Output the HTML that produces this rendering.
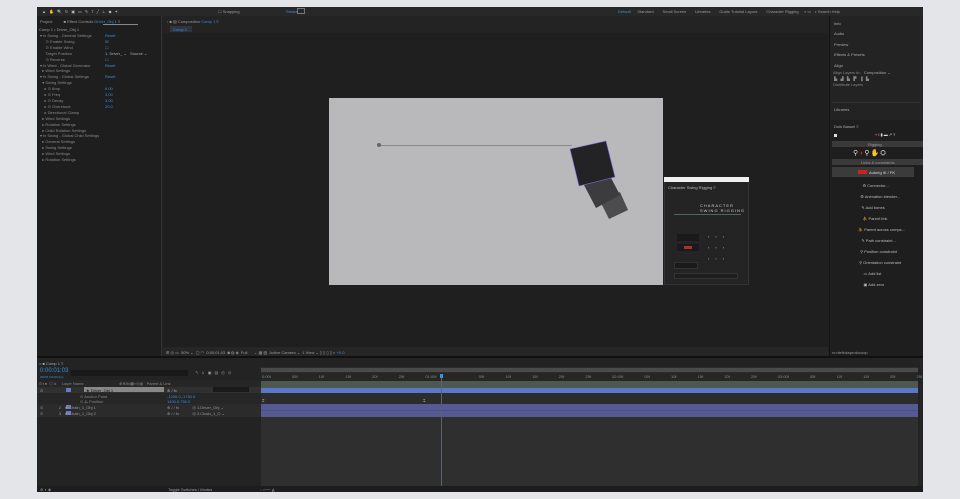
<!DOCTYPE html>
<html><head><style>
*{margin:0;padding:0;box-sizing:border-box}
body{width:960px;height:499px;background:#e4e5e8;position:relative;overflow:hidden;font-family:"Liberation Sans",sans-serif;font-size:4px;color:#9a9a9a}
div{position:absolute}
.t{white-space:nowrap;font-size:4px}
.b{color:#3c8ee0}
</style></head><body>
<div style="left:37px;top:7px;width:886px;height:485px;background:#232323"></div>
<!-- top bar -->
<div style="left:37px;top:7px;width:886px;height:9px;background:#282828"></div>
<div class="t" style="left:42px;top:9px;color:#bbb;letter-spacing:3px">▲✋🔍↻▣▭✎T╱⊥◆✶</div>
<div class="t" style="left:218px;top:9px">☐ Snapping</div>
<div class="t" style="left:286px;top:9px" ><span class="b">Stroke</span></div>
<div style="left:297px;top:8px;width:8px;height:6px;border:1px solid #777"></div>
<div class="t" style="left:618px;top:9px"><span class="b">Default</span> &nbsp;&nbsp;&nbsp;&nbsp; Standard &nbsp;&nbsp;&nbsp;&nbsp;&nbsp;&nbsp; Small Screen &nbsp;&nbsp;&nbsp;&nbsp;&nbsp;&nbsp; Libraries &nbsp;&nbsp;&nbsp;&nbsp;&nbsp;&nbsp; Guide Tutorial Layout &nbsp;&nbsp;&nbsp;&nbsp;&nbsp;&nbsp; Character Rigging &nbsp;&nbsp;&nbsp; » ▭ &nbsp; ⌕ Search Help</div>
<!-- left panel -->
<div style="left:37px;top:16px;width:125px;height:340px;background:#1e1e1e;border-right:1px solid #333"></div>
<div class="t" style="left:40px;top:19px">Project &nbsp;&nbsp;&nbsp;&nbsp;&nbsp;&nbsp;&nbsp;&nbsp; ■ Effect Controls <span class="b">Driver_Obj 1</span> ≡</div>
<div style="left:103px;top:24px;width:35px;height:1px;background:#888"></div>
<div class="t" style="left:39px;top:27px">Comp 1 • Driver_Obj 1</div>
<div class="t" style="left:40px;top:33px;line-height:5.9px;color:#8a8a8a">
▾ fx Swing - General Settings<br>&nbsp;&nbsp;&nbsp;&nbsp;&nbsp;⊙ Enable Swing<br>&nbsp;&nbsp;&nbsp;&nbsp;&nbsp;⊙ Enable Wind<br>&nbsp;&nbsp;&nbsp;&nbsp;&nbsp;Target Position<br>&nbsp;&nbsp;&nbsp;&nbsp;&nbsp;⊙ Reverse<br>▾ fx Wind - Global Generator<br>&nbsp;&nbsp;▸ Wind Settings<br>▾ fx Swing - Global Settings<br>&nbsp;&nbsp;▾ Swing Settings<br>&nbsp;&nbsp;&nbsp;&nbsp;▸ ⊙ Amp<br>&nbsp;&nbsp;&nbsp;&nbsp;▸ ⊙ Freq<br>&nbsp;&nbsp;&nbsp;&nbsp;▸ ⊙ Decay<br>&nbsp;&nbsp;&nbsp;&nbsp;▸ ⊙ Overshoot<br>&nbsp;&nbsp;&nbsp;&nbsp;▸ Directional Clamp<br>&nbsp;&nbsp;▸ Wind Settings<br>&nbsp;&nbsp;▸ Rotation Settings<br>&nbsp;&nbsp;▸ Child Rotation Settings<br>▾ fx Swing - Global Child Settings<br>&nbsp;&nbsp;▸ General Settings<br>&nbsp;&nbsp;▸ Swing Settings<br>&nbsp;&nbsp;▸ Wind Settings<br>&nbsp;&nbsp;▸ Rotation Settings</div>
<div class="t b" style="left:105px;top:33px;line-height:5.9px">Reset<br>☒<br>☐<br><span style="color:#aaa">1. Driver_ ⌄ &nbsp; Source ⌄</span><br>☐<br>Reset<br><br>Reset<br><br>6.00<br>3.00<br>3.00<br>20.0</div>
<!-- viewer -->
<div class="t" style="left:167px;top:19px">› ■ ▤ Composition <span class="b">Comp 1</span> ≡</div>
<div style="left:170px;top:26px;width:22px;height:6px;background:#2e3440"></div>
<div class="t b" style="left:173px;top:27px">Comp 1</div>
<div style="left:163px;top:33px;width:665px;height:314px;background:#1f1f1f"></div>
<div style="left:329px;top:98px;width:334px;height:187px;background:#b9b9bb"></div>
<div style="left:378px;top:145px;width:194px;height:1px;background:#8a8a8a"></div>
<div style="left:377px;top:143px;width:4px;height:4px;border-radius:50%;background:#666"></div>
<svg style="position:absolute;left:0;top:0" width="960" height="499">
<polygon points="600,201 620,192 628,210 609,219" fill="#4c4c4e"/>
<polygon points="584,185 610,176 620,195 596,208" fill="#3c3c3e"/>
<polygon points="570,149 606,141 615,177 579,186" fill="#232325" stroke="#7a70e8" stroke-width=".6"/>
</svg>
<!-- character panel -->
<div style="left:664px;top:177px;width:85px;height:108px;background:#242424;border:1px solid #333"></div>
<div style="left:664px;top:177px;width:85px;height:5px;background:#f0f0f0"></div>
<div class="t" style="left:668px;top:185px;color:#bbb">Character Swing Rigging ≡</div>
<div class="t" style="left:700px;top:203px;color:#cfcfcf;letter-spacing:1px;line-height:5px">CHARACTER<br>SWING RIGGING</div>
<div style="left:674px;top:214px;width:67px;height:1px;background:#4a6a5a"></div>
<div style="left:677px;top:234px;width:22px;height:7px;background:#1a1a1a"></div>
<div style="left:677px;top:244px;width:22px;height:7px;background:#1a1a1a"></div>
<div style="left:684px;top:246px;width:8px;height:3px;background:#b03030"></div>
<div style="left:674px;top:262px;width:24px;height:7px;background:#1a1a1a;border:1px solid #333"></div>
<div style="left:674px;top:273px;width:64px;height:6px;background:#1e1e1e;border:1px solid #333"></div>
<div class="t" style="left:708px;top:231px;color:#888;line-height:11px;letter-spacing:6px">▪▪▪<br>▪▪▪<br>▪▪▪</div>
<!-- viewer bottom bar -->
<div style="left:163px;top:347px;width:665px;height:9px;background:#262626"></div>
<div class="t" style="left:166px;top:350px">⊞ ◎ ▭ &nbsp;50% ⌄ &nbsp;▢ ◠ &nbsp;0;00;01;03 &nbsp;◙ ◍ ◈ &nbsp;Full &nbsp;&nbsp;&nbsp;&nbsp;&nbsp;⌄ ▦ ▧ &nbsp;Active Camera ⌄ &nbsp;1 View ⌄ ▯ ▯ ▯ ▯ ◐ <span class="b">+0.0</span></div>
<!-- right panels -->
<div style="left:829px;top:16px;width:1px;height:340px;background:#111"></div>
<div class="t" style="left:834px;top:19px;line-height:10.4px;color:#aaa">Info<br>Audio<br>Preview<br>Effects &amp; Presets<br>Align</div>
<div class="t" style="left:833px;top:70px;color:#888;line-height:6px">Align Layers to: &nbsp;&nbsp;<span style="color:#aaa">Composition ⌄</span><br>&nbsp;▙ &nbsp;&nbsp;▟ &nbsp;&nbsp;▙ &nbsp;&nbsp;▛ &nbsp;&nbsp;▐ &nbsp;&nbsp;▙<br>Distribute Layers<br></div>
<div style="left:832px;top:102px;width:88px;height:1px;background:#333"></div>
<div class="t" style="left:834px;top:107px;color:#aaa">Libraries</div>
<div style="left:831px;top:120px;width:92px;height:236px;background:#1e1e1e"></div>
<div class="t" style="left:834px;top:124px;color:#aaa">Duik Bassel ≡</div>
<div style="left:834px;top:134px;width:3px;height:3px;background:#ddd"></div>
<div class="t" style="left:875px;top:132px;color:#ddd;letter-spacing:1px"><span style="color:#d23">♥</span>I▮▬↗?</div>
<div style="left:832px;top:141px;width:91px;height:6px;background:#3a3a3a"></div>
<div class="t" style="left:868px;top:142px">Rigging</div>
<div class="t" style="left:853px;top:149px;color:#ddd;font-size:7px;letter-spacing:1px">⚲<span style="color:#c22">◖</span>⚲✋⛭</div>
<div style="left:832px;top:159px;width:91px;height:6px;background:#3a3a3a"></div>
<div class="t" style="left:861px;top:160px">Links &amp; constraints</div>
<div style="left:832px;top:167px;width:82px;height:10px;background:#3b3b3b"></div>
<div style="left:858px;top:170px;width:9px;height:4px;background:#c22"></div>
<div class="t" style="left:869px;top:170px;color:#ddd">Autorig IK / FK</div>
<div class="t" style="left:858px;top:180px;color:#bbb;line-height:11px">&nbsp;&nbsp;&nbsp;&nbsp;⚙ Connector...<br>&nbsp;&nbsp;⚙ Animation blender...<br>&nbsp;&nbsp;&nbsp;✎ Add bones<br>&nbsp;&nbsp;&nbsp;&nbsp;⛹ Parent link<br>⛹ Parent across comps...<br>&nbsp;&nbsp;&nbsp;✎ Path constraint...<br>&nbsp;&nbsp;⚲ Position constraint<br>&nbsp;⚲ Orientation constraint<br>&nbsp;&nbsp;&nbsp;&nbsp;&nbsp;▭ Add list<br>&nbsp;&nbsp;&nbsp;&nbsp;&nbsp;▣ Add zero</div>
<div class="t" style="left:832px;top:350px">rx:nlelinksprotocoop</div>
<!-- timeline -->
<div style="left:37px;top:356px;width:886px;height:2px;background:#111"></div>
<div class="t" style="left:39px;top:361px;color:#aaa">× ■ Comp 1 ≡</div>
<div class="t b" style="left:40px;top:368px;font-size:6px">0:00:01:03</div>
<div class="t b" style="left:40px;top:375px;font-size:3px">00033 (30.00 fps)</div>
<div style="left:71px;top:370px;width:117px;height:6px;background:#191919"></div>
<div class="t" style="left:195px;top:370px;color:#999;letter-spacing:3px">↰↳▣▤◎◷</div>
<div style="left:37px;top:380px;width:224px;height:37px;background:#262626"></div>
<div class="t" style="left:39px;top:381px;color:#888">⊙◐● &nbsp;⬡ # &nbsp;&nbsp;&nbsp;&nbsp;Layer Name &nbsp;&nbsp;&nbsp;&nbsp;&nbsp;&nbsp;&nbsp;&nbsp;&nbsp;&nbsp;&nbsp;&nbsp;&nbsp;&nbsp;&nbsp;&nbsp;&nbsp;&nbsp;&nbsp;&nbsp;&nbsp;&nbsp;&nbsp;&nbsp;&nbsp;&nbsp;&nbsp;&nbsp;&nbsp;&nbsp; ⊕✲\fx▦◐◎◍ &nbsp;&nbsp;Parent &amp; Link</div>
<div style="left:37px;top:387px;width:224px;height:6px;background:#303030"></div>
<div style="left:66px;top:388px;width:5px;height:4px;background:#6a78c8"></div>
<div style="left:84px;top:387px;width:80px;height:5px;background:#888"></div>
<div class="t" style="left:86px;top:388px;color:#111">★ Driver_Obj 1</div>
<div style="left:213px;top:387px;width:36px;height:5px;background:#1a1a1a"></div>
<div class="t" style="left:40px;top:388px;color:#aaa">⊙</div>
<div class="t" style="left:167px;top:388px;color:#aaa">⊕ / fx</div>
<div class="t" style="left:80px;top:394px;line-height:5.3px;color:#888">⊙ Anchor Point<br>⊙ ⍼ Position</div>
<div class="t b" style="left:167px;top:394px;line-height:5.3px">-1200.0,-1750.0<br>1400.0,750.0</div>
<div style="left:37px;top:404px;width:224px;height:13px;background:#2b2b2b"></div>
<div style="left:66px;top:405px;width:5px;height:4px;background:#6a78c8"></div>
<div style="left:66px;top:411px;width:5px;height:4px;background:#6a78c8"></div>
<div class="t" style="left:40px;top:405px;line-height:6px;color:#999">⊙ &nbsp;&nbsp;&nbsp;&nbsp;&nbsp;&nbsp;&nbsp;&nbsp;&nbsp;&nbsp;&nbsp;&nbsp;&nbsp;2 &nbsp;&nbsp;★ Chain_1_Obj 1<br>⊙ &nbsp;&nbsp;&nbsp;&nbsp;&nbsp;&nbsp;&nbsp;&nbsp;&nbsp;&nbsp;&nbsp;&nbsp;&nbsp;3 &nbsp;&nbsp;★ Chain_1_Obj 2</div>
<div class="t" style="left:167px;top:405px;line-height:6px;color:#999">⊕ / / fx &nbsp;&nbsp;&nbsp;&nbsp;&nbsp;&nbsp;&nbsp;&nbsp;&nbsp;&nbsp; ◎ 1.Driver_Obj ⌄<br>⊕ / / fx &nbsp;&nbsp;&nbsp;&nbsp;&nbsp;&nbsp;&nbsp;&nbsp;&nbsp;&nbsp; ◎ 2.Chain_1_O ⌄</div>
<div style="left:37px;top:417px;width:224px;height:69px;background:#232323"></div>
<!-- track area -->
<div style="left:261px;top:367px;width:657px;height:119px;background:#2c2c2c"></div>
<div style="left:261px;top:368px;width:657px;height:4px;background:#4a4a4a"></div>
<div style="left:261px;top:373px;width:657px;height:8px;background:#262626"></div>
<div class="t" style="left:262px;top:374px;color:#888;word-spacing:20px">0:00f 05f 10f 15f 20f 25f 01:00f &nbsp;05f 10f 15f 20f 25f 02:00f 05f 10f 15f 20f 25f 03:00f 05f 10f 15f 20f 25f</div>
<div style="left:261px;top:381px;width:657px;height:7px;background:#4f5850"></div>
<div style="left:261px;top:388px;width:657px;height:5px;background:#5a78c8"></div>
<div style="left:261px;top:404px;width:657px;height:13px;background:#555a92"></div>
<div style="left:261px;top:410px;width:657px;height:1px;background:#4a4f84"></div>
<div style="left:261px;top:417px;width:657px;height:69px;background:#2f2f2f"></div>
<div class="t" style="left:262px;top:398px;color:#bbb">⌶</div>
<div class="t" style="left:423px;top:398px;color:#bbb">⌶</div>
<div style="left:440px;top:374px;width:3px;height:4px;background:#3c8ee0"></div>
<div style="left:441px;top:378px;width:1px;height:108px;background:#5a6470"></div>
<!-- bottom status -->
<div style="left:37px;top:486px;width:886px;height:6px;background:#1d1d1d"></div>
<div class="t" style="left:40px;top:487px">⊚ ◐ ◈</div>
<div class="t" style="left:168px;top:487px">Toggle Switches / Modes</div>
<div class="t" style="left:260px;top:487px">◦ ○── ◭</div>
</body></html>
